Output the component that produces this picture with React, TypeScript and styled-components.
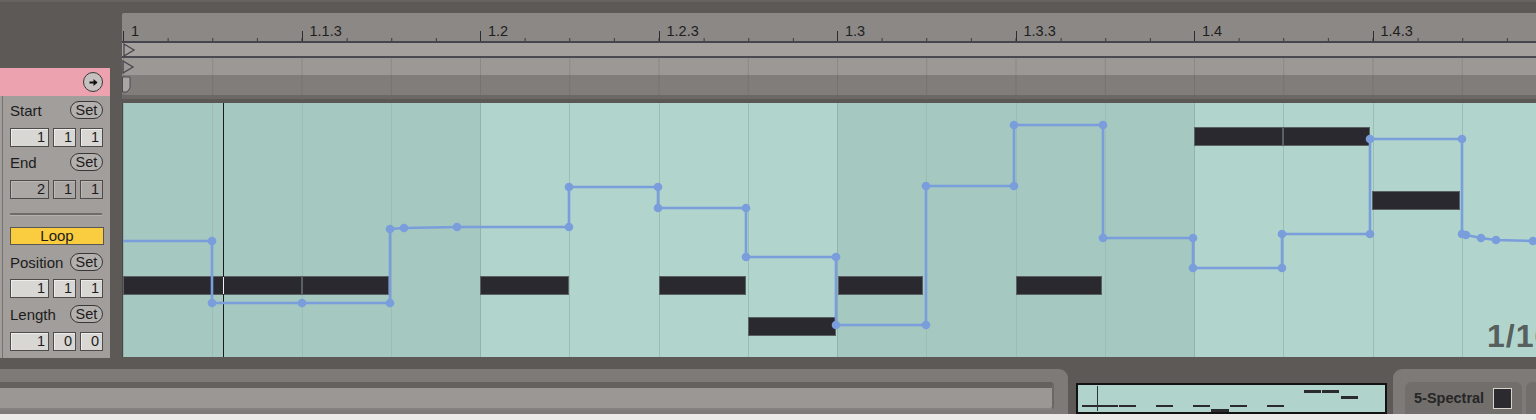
import React from 'react';
import styled, { createGlobalStyle } from 'styled-components';

const GlobalStyle = createGlobalStyle`
  html, body {
    margin: 0;
    padding: 0;
    background: #5c5956;
  }
  body {
    font-family: "Liberation Sans", Arial, sans-serif;
  }
`;

const BEAT = 357;
const SIXTEENTH = BEAT / 4;
const GRID_X = 123;
const GRID_Y = 103;

interface Note {
  start: number;
  end: number;
  y: number;
}

const notes: Note[] = [
  { start: 123, end: 302, y: 276 },
  { start: 302, end: 389, y: 276 },
  { start: 480, end: 569, y: 276 },
  { start: 659, end: 746, y: 276 },
  { start: 748, end: 836, y: 317 },
  { start: 838, end: 923, y: 276 },
  { start: 1016, end: 1102, y: 276 },
  { start: 1194, end: 1283, y: 127 },
  { start: 1283, end: 1370, y: 127 },
  { start: 1372, end: 1460, y: 191 },
];

const envelope: [number, number][] = [
  [212, 241], [212, 303], [302, 303], [390, 303], [390, 229], [404, 228],
  [457, 227], [569, 227], [569, 187], [658, 187], [658, 208], [746, 208],
  [746, 257], [836, 257], [836, 325], [926, 325], [926, 186], [1014, 186],
  [1014, 125], [1103, 125], [1103, 238], [1193, 238], [1193, 268], [1282, 268],
  [1282, 234], [1370, 234], [1370, 139], [1462, 139], [1462, 234], [1466, 235],
  [1481, 238], [1496, 240], [1533, 241],
];

const rulerLabels = ['1', '1.1.3', '1.2', '1.2.3', '1.3', '1.3.3', '1.4', '1.4.3'];

const Screen = styled.div`
  width: 1536px;
  height: 420px;
  overflow: hidden;
  background: #5c5956;
  display: flex;
  flex-direction: column;
`;

const TopStrip = styled.div`
  height: 13px;
  flex: none;
  background: linear-gradient(#666360 0 2px, #5c5956 2px);
`;

const Middle = styled.div`
  display: flex;
  height: 345px;
  flex: none;
`;

const Side = styled.div`
  width: 122px;
  flex: none;
  display: flex;
  flex-direction: column;
  padding-top: 55px;
  box-sizing: border-box;
`;

const ClipPanel = styled.div`
  width: 110px;
  flex: 1;
  display: flex;
  flex-direction: column;
`;

const ClipHeader = styled.div`
  height: 28px;
  flex: none;
  background: #eca2af;
  display: flex;
  align-items: center;
  justify-content: flex-end;
  padding-right: 7px;
`;

const RoundButton = styled.div`
  width: 18px;
  height: 18px;
  border-radius: 50%;
  border: 1.5px solid #3a3838;
  background: #c6c1c0;
  display: flex;
  align-items: center;
  justify-content: center;
`;

const ClipBody = styled.div`
  flex: 1;
  background: linear-gradient(to right, #a19e9b 2px, #76726f 2px 3px, #a19e9b 3px);
  padding: 5px 7px 0 10px;
  display: flex;
  flex-direction: column;
`;

const FieldRow = styled.div<{ $mt?: number }>`
  display: flex;
  align-items: center;
  justify-content: space-between;
  height: 18px;
  margin-top: ${(p) => p.$mt ?? 0}px;
  font-size: 15px;
  color: #1c1c1c;
`;

const SetButton = styled.div`
  width: 31px;
  height: 16px;
  border: 1.5px solid #383838;
  border-radius: 9px;
  background: #b3b0ad;
  font-size: 14.5px;
  line-height: 16px;
  text-align: center;
  color: #1c1c1c;
`;

const BoxRow = styled.div<{ $mt: number }>`
  display: flex;
  gap: 4px;
  margin-top: ${(p) => p.$mt}px;
`;

const NumBox = styled.div<{ $w: number; $dim?: boolean }>`
  width: ${(p) => p.$w}px;
  height: 19px;
  box-sizing: border-box;
  border: 1px solid #4e4c4a;
  background: ${(p) => (p.$dim ? '#aaa7a4' : '#d9d7d4')};
  box-shadow: inset 1px 1px 0 ${(p) => (p.$dim ? '#bcb9b6' : '#efedeb')};
  font-size: 14.5px;
  line-height: 17px;
  text-align: right;
  padding-right: 3px;
  color: #1c1c1c;
`;

const Separator = styled.div`
  height: 2px;
  margin-top: 14px;
  margin-right: 1px;
  background: #6f6c69;
  box-shadow: 0 1px 0 #b4b1ae;
`;

const LoopButton = styled.div`
  height: 18px;
  margin-top: 12px;
  width: 94px;
  box-sizing: border-box;
  border: 1px solid #5a5650;
  background: #f9cd3f;
  font-size: 15px;
  line-height: 16px;
  text-align: center;
  color: #1c1c1c;
`;

const Editor = styled.div`
  flex: 1;
  display: flex;
  flex-direction: column;
  min-width: 0;
`;

const Ruler = styled.div`
  height: 28px;
  flex: none;
  background: #8b8885;
  border-bottom: 2px solid #46444c;
  border-top-left-radius: 2px;
  padding-left: 1px;
  display: flex;
  overflow: hidden;
`;

const HalfBeat = styled.div`
  flex: 0 0 ${BEAT / 2}px;
  display: flex;
  align-items: flex-end;
  background-image: linear-gradient(to right, #3a3a3c 1px, transparent 1px);
  background-size: ${BEAT / 8}px 3px;
  background-position: 0 100%;
  background-repeat: repeat-x;
`;

const Tick = styled.div`
  width: 1px;
  height: 10px;
  background: #2c2c2e;
`;

const RulerLabel = styled.span`
  font-size: 14.5px;
  line-height: 14px;
  margin: 0 0 3px 7px;
  color: #1e1e1e;
`;

const LoopRow = styled.div`
  height: 13px;
  flex: none;
  background: #a3a09d;
  border-bottom: 2px solid #4a4850;
  padding-left: 1px;
  display: flex;
  align-items: center;
`;

const Lane = styled.div<{ $h: number; $bg: string; $line: string }>`
  height: ${(p) => p.$h}px;
  flex: none;
  background-color: ${(p) => p.$bg};
  background-image: linear-gradient(to right, ${(p) => p.$line} 1px, transparent 1px);
  background-size: ${SIXTEENTH}px 100%;
  background-position: 1px 0;
  display: flex;
  align-items: center;
`;

const LaneGap = styled.div`
  height: 8px;
  flex: none;
  background: linear-gradient(#6b6866 0 4px, #5a5754 4px);
`;

const Grid = styled.div`
  height: 254px;
  flex: none;
  position: relative;
  overflow: hidden;
  border-left: 1px solid #4b4947;
  display: flex;
`;

const Beat = styled.div<{ $dark: boolean }>`
  flex: 0 0 ${BEAT}px;
  display: flex;
  background: ${(p) => (p.$dark ? '#a5c8c1' : '#b1d5cd')};
`;

const Sixteenth = styled.div<{ $beat: boolean }>`
  flex: 0 0 ${SIXTEENTH}px;
  box-sizing: border-box;
  border-left: 1px solid ${(p) => (p.$beat ? '#93b3ac' : '#9cbdb6')};
`;

const NoteBar = styled.div`
  position: absolute;
  height: 19px;
  box-sizing: border-box;
  background: #2a2930;
  border: 1px solid #5b6062;
`;

const Cursor = styled.div`
  position: absolute;
  left: ${223 - GRID_X}px;
  top: 0;
  bottom: 0;
  width: 1px;
  background: linear-gradient(#1b1b1b 0 174px, #f2f2f2 174px 191px, #1b1b1b 191px);
`;

const Overlay = styled.svg`
  position: absolute;
  left: 0;
  top: 0;
`;

const GridLabel = styled.div`
  position: absolute;
  left: ${1487 - GRID_X}px;
  bottom: 2px;
  font-size: 32px;
  font-weight: bold;
  letter-spacing: 1px;
  color: #57605d;
  white-space: nowrap;
`;

const Bottom = styled.div`
  flex: 1;
  display: flex;
  flex-direction: column;
`;

const BottomRow = styled.div`
  height: 56px;
  flex: none;
  display: flex;
  align-items: flex-end;
`;

const WindowEdge = styled.div`
  flex: 1;
  background: #ebeae9;
`;

const LeftTab = styled.div`
  width: 1068px;
  height: 45px;
  flex: none;
  background: #7e7a77;
  border-top-right-radius: 9px;
  padding-top: 13px;
  box-sizing: border-box;
`;

const ScrollStrip = styled.div`
  width: 1054px;
  height: 28px;
  box-sizing: border-box;
  background: #9b9794;
  border-top: 6px solid #64615e;
  border-right: 2px solid #6a6764;
  border-bottom: 2px solid #85817e;
  border-radius: 0 4px 4px 0;
`;

const Overview = styled.div`
  width: 311px;
  height: 31px;
  flex: none;
  margin: 0 6px 0 8px;
  box-sizing: border-box;
  border: 2px solid #121212;
  background: #b0d4cc;
  position: relative;
  overflow: hidden;
`;

const MiniNote = styled.div`
  position: absolute;
  height: 2.5px;
  background: #2b2b2e;
`;

const MiniCursor = styled.div`
  position: absolute;
  left: 19px;
  top: 1px;
  bottom: 1px;
  width: 1px;
  background: #333;
`;

const RightTab = styled.div`
  flex: 1;
  height: 45px;
  background: #7e7a77;
  border-top-left-radius: 9px;
  padding: 13px 0 0 12px;
  box-sizing: border-box;
  display: flex;
  gap: 4px;
`;

const DeviceBox = styled.div`
  width: 117px;
  height: 32px;
  flex: none;
  background: #716e6b;
  border-radius: 6px 6px 0 0;
  display: flex;
  align-items: center;
  padding-left: 9px;
  gap: 9px;
  box-sizing: border-box;
`;

const DeviceName = styled.span`
  font-size: 14.5px;
  font-weight: bold;
  color: #262626;
`;

const Toggle = styled.div`
  width: 19px;
  height: 21px;
  flex: none;
  box-sizing: border-box;
  border: 1.5px solid #d9d4c9;
  background: #2b2a2e;
`;

const NextBox = styled.div`
  width: 20px;
  height: 32px;
  flex: none;
  background: #716e6b;
  border-radius: 6px 0 0 0;
`;

const LoopMarker: React.FC = () => (
  <svg width="13" height="14" viewBox="0 0 13 14">
    <polygon points="1,1 11,7 1,13" fill="none" stroke="#47454d" strokeWidth="1.3" />
  </svg>
);

const Field: React.FC<{ label: string; mt?: number }> = ({ label, mt }) => (
  <FieldRow $mt={mt}>
    <span>{label}</span>
    <SetButton>Set</SetButton>
  </FieldRow>
);

const Boxes: React.FC<{ values: string[]; mt: number; dim?: boolean }> = ({ values, mt, dim }) => (
  <BoxRow $mt={mt}>
    <NumBox $w={39} $dim={dim}>{values[0]}</NumBox>
    <NumBox $w={23} $dim={dim}>{values[1]}</NumBox>
    <NumBox $w={23} $dim={dim}>{values[2]}</NumBox>
  </BoxRow>
);

export default function App() {
  const path = 'M123,241 ' + envelope.map(([x, y]) => `L${x},${y}`).join(' ') + ' L1540,241';

  return (
    <>
      <GlobalStyle />
      <Screen>
        <TopStrip />
        <Middle>
          <Side>
            <ClipPanel>
              <ClipHeader>
                <RoundButton>
                  <svg width="11" height="11" viewBox="0 0 11 11">
                    <path d="M1.5,5.5 H8.5" stroke="#111" strokeWidth="2" />
                    <path d="M5.5,2 L9.5,5.5 L5.5,9 Z" fill="#111" />
                  </svg>
                </RoundButton>
              </ClipHeader>
              <ClipBody>
                <Field label="Start" />
                <Boxes values={['1', '1', '1']} mt={9} />
                <Field label="End" mt={6} />
                <Boxes values={['2', '1', '1']} mt={9} dim />
                <Separator />
                <LoopButton>Loop</LoopButton>
                <Field label="Position" mt={8} />
                <Boxes values={['1', '1', '1']} mt={8} />
                <Field label="Length" mt={7} />
                <Boxes values={['1', '0', '0']} mt={9} />
              </ClipBody>
            </ClipPanel>
          </Side>
          <Editor>
            <Ruler>
              {rulerLabels.map((l) => (
                <HalfBeat key={l}>
                  <Tick />
                  <RulerLabel>{l}</RulerLabel>
                </HalfBeat>
              ))}
            </Ruler>
            <LoopRow>
              <LoopMarker />
            </LoopRow>
            <Lane $h={17} $bg="#9b9895" $line="#8b8885">
              <LoopMarker />
            </Lane>
            <Lane $h={20} $bg="#807d7a" $line="#75726f">
              <svg width="11" height="20" viewBox="0 0 11 20">
                <path d="M0.5,2 H8 V13 L5,17 H0.5 Z" fill="#a9a6a3" stroke="#4d4b52" strokeWidth="1" />
              </svg>
            </Lane>
            <LaneGap />
            <Grid>
              {[true, false, true, false].map((dark, b) => (
                <Beat key={b} $dark={dark}>
                  {[0, 1, 2, 3].map((s) => (
                    <Sixteenth key={s} $beat={s === 0} />
                  ))}
                </Beat>
              ))}
              {notes.map((n, i) => (
                <NoteBar
                  key={i}
                  style={{ left: n.start - GRID_X, top: n.y - GRID_Y, width: n.end - n.start }}
                />
              ))}
              <Cursor />
              <Overlay width={1413} height={254} viewBox={`${GRID_X} ${GRID_Y} 1413 254`}>
                <path d={path} fill="none" stroke="#7a9ddc" strokeWidth="2.6" strokeLinejoin="round" />
                {envelope.map(([x, y], i) => (
                  <circle key={i} cx={x} cy={y} r="4.3" fill="#7a9ddc" />
                ))}
              </Overlay>
              <GridLabel>1/16</GridLabel>
            </Grid>
          </Editor>
        </Middle>
        <Bottom>
          <BottomRow>
            <LeftTab>
              <ScrollStrip />
            </LeftTab>
            <Overview>
              {notes.map((n, i) => (
                <MiniNote
                  key={i}
                  style={{
                    left: 4 + (n.start - GRID_X) * 0.207,
                    width: (n.end - n.start) * 0.207 - 1,
                    top: 5 + (n.y - 127) * 0.1,
                  }}
                />
              ))}
              <MiniCursor />
            </Overview>
            <RightTab>
              <DeviceBox>
                <DeviceName>5-Spectral</DeviceName>
                <Toggle />
              </DeviceBox>
              <NextBox />
            </RightTab>
          </BottomRow>
          <WindowEdge />
        </Bottom>
      </Screen>
    </>
  );
}
